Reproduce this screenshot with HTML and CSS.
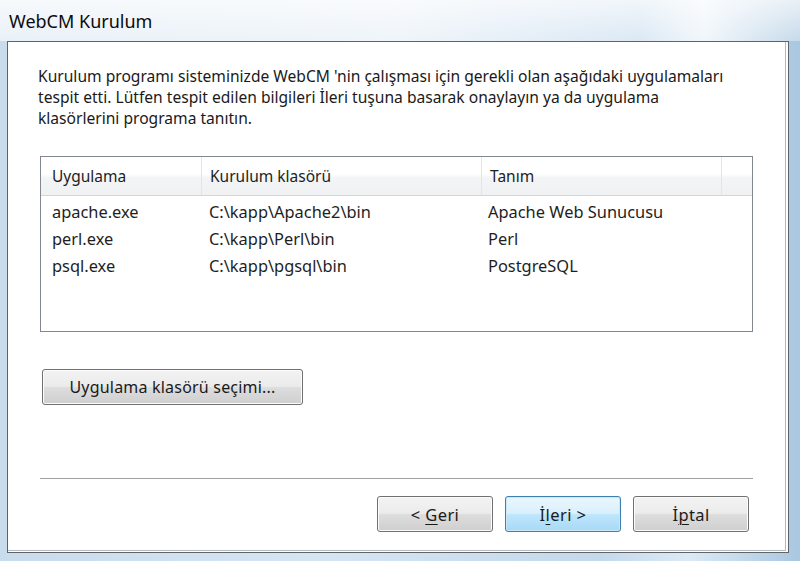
FILE: index.html
```html
<!DOCTYPE html>
<html lang="tr">
<head>
    <meta charset="UTF-8">
    <title>WebCM Kurulum</title>
    <link rel="stylesheet" href="styles.css">
</head>
<body>
    <div class="window">
        <div class="titlebar">WebCM Kurulum</div>
        <div class="client">
            <p class="intro">Kurulum programı sisteminizde WebCM 'nin çalışması için gerekli olan aşağıdaki uygulamaları tespit etti. Lütfen tespit edilen bilgileri İleri tuşuna basarak onaylayın ya da uygulama klasörlerini programa tanıtın.</p>

            <div class="listview">
                <div class="lv-header">
                    <div class="col col-app">Uygulama</div>
                    <div class="col col-dir">Kurulum klasörü</div>
                    <div class="col col-desc">Tanım</div>
                    <div class="col col-rest"></div>
                </div>
                <div class="lv-row">
                    <div class="col col-app">apache.exe</div>
                    <div class="col col-dir">C:\kapp\Apache2\bin</div>
                    <div class="col col-desc">Apache Web Sunucusu</div>
                </div>
                <div class="lv-row">
                    <div class="col col-app">perl.exe</div>
                    <div class="col col-dir">C:\kapp\Perl\bin</div>
                    <div class="col col-desc">Perl</div>
                </div>
                <div class="lv-row">
                    <div class="col col-app">psql.exe</div>
                    <div class="col col-dir">C:\kapp\pgsql\bin</div>
                    <div class="col col-desc">PostgreSQL</div>
                </div>
            </div>

            <button class="btn btn-select">Uygulama klasörü seçimi...</button>

            <div class="spacer"></div>
            <hr class="separator">

            <div class="actions">
                <button class="btn">&lt; <u>G</u>eri</button>
                <button class="btn btn-default">İ<u>l</u>eri &gt;</button>
                <button class="btn">İ<u>p</u>tal</button>
            </div>
        </div>
    </div>
</body>
</html>
```

FILE: styles.css
```css
body {
    margin: 0;
    font-family: "Noto Sans", "Open Sans", sans-serif;
    color: #1e1e1e;
}
.window {
    width: 800px;
    height: 561px;
    display: flex;
    flex-direction: column;
    background: linear-gradient(90deg, #c9dcec 0%, #d6e5f2 40%, #c4d9eb 75%, #dceaf5 86%, #a9c7e0 100%);
}
.titlebar {
    height: 41px;
    padding-left: 9px;
    display: flex;
    align-items: center;
    font-size: 18px;
    color: #0c0c0c;
    background: linear-gradient(180deg, rgba(255,255,255,0.75) 0%, rgba(255,255,255,0.35) 100%),
                linear-gradient(90deg, #dde9f4 0%, #e6eff7 50%, #c8dcee 80%, #eaf2f9 88%, #a7c6df 100%);
}
.client {
    flex: 1;
    margin: 0 11px 8px 7px;
    padding: 24px 35px 20px 30px;
    background: #ffffff;
    border: 1px solid #5f6468;
    box-shadow: inset -2px -1px 0 #ffffff, inset -3px -2px 0 #b4b9bd;
    display: flex;
    flex-direction: column;
}
.intro {
    max-width: 705px;
    margin: 0 0 27px;
    font-size: 15.6px;
    line-height: 21px;
    color: #1a1a1a;
}
.listview {
    height: 174px;
    border: 1px solid #828790;
    margin-left: 2px;
    font-size: 16.4px;
}
.lv-header {
    display: flex;
    height: 38px;
    font-size: 15.5px;
    border-bottom: 1px solid #d5d5d5;
    background: linear-gradient(180deg, #ffffff 0%, #ffffff 45%, #f3f4f6 55%, #f0f1f3 100%);
}
.lv-header .col {
    border-right: 1px solid #e3e4e6;
    display: flex;
    align-items: center;
}
.lv-header .col-rest {
    flex: 1;
    border-right: none;
}
.col {
    padding-left: 11px;
    white-space: nowrap;
}
.col-app {
    width: 149px;
}
.col-dir {
    width: 271px;
    padding-left: 8px;
}
.col-desc {
    width: 231px;
    padding-left: 8px;
}
.lv-row {
    display: flex;
    height: 27px;
    align-items: center;
}
.lv-header + .lv-row {
    margin-top: 2px;
}
.btn {
    height: 36px;
    width: 116px;
    font-family: inherit;
    font-size: 16.5px;
    color: #1a1a1a;
    border: 1px solid #707070;
    border-radius: 3px;
    background: linear-gradient(180deg, #f3f3f3 0%, #ebebeb 48%, #dddddd 52%, #cfcfcf 100%);
    box-shadow: inset 0 0 0 1px #fcfcfc;
    padding: 0;
    letter-spacing: 0.4px;
}
.btn u {
    text-decoration-thickness: 1px;
    text-underline-offset: 3px;
}
.btn-select {
    width: 261px;
    margin-top: 37px;
    margin-left: 4px;
    align-self: flex-start;
    font-size: 16px;
    letter-spacing: 0.2px;
}
.spacer {
    flex: 1;
}
.separator {
    margin: 0 0 16px 2px;
    border: none;
    border-top: 1px solid #a0a0a0;
    border-bottom: 1px solid #ffffff;
}
.actions {
    display: flex;
    justify-content: flex-end;
    gap: 12px;
    padding-right: 4px;
}
.btn-default {
    border-color: #3c7fb1;
    background: linear-gradient(180deg, #eaf6fd 0%, #d9f0fc 48%, #bee6fd 52%, #a7d9f5 100%);
    box-shadow: inset 0 0 0 1px #cbe8f8;
}
```
